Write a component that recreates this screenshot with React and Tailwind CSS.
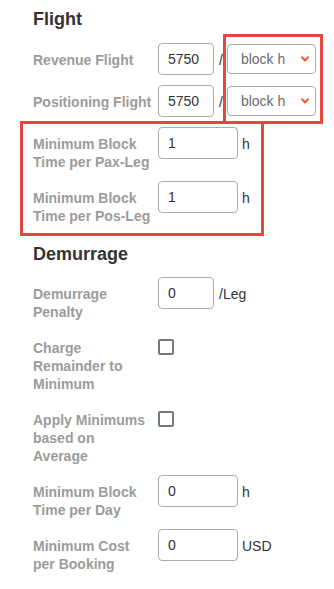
import React from "react";

const font = { fontFamily: '"Liberation Sans", Arial, sans-serif' };

function Label({ children }) {
  return (
    <div className="w-[119px] mr-[6px] shrink-0 pt-[8px] leading-[18px] text-[14px] font-bold text-[#9b9b9b]">
      {children}
    </div>
  );
}

function Box({ w, value }) {
  return (
    <div
      className={`${w} h-[32px] shrink-0 border border-[#ababab] rounded-[4px] pl-[9px] flex items-center text-[14px] text-[#333]`}
    >
      {value}
    </div>
  );
}

function Unit({ children, ml }) {
  return (
    <div className={`${ml} pt-[8px] leading-[18px] text-[14px] text-[#333]`}>
      {children}
    </div>
  );
}

function Select() {
  return (
    <div className="ml-[4px] mt-[1px] w-[89px] h-[30px] shrink-0 border border-[#ababab] rounded-[4px] pl-[13px] pr-[6px] flex items-center justify-between text-[14px] text-[#6b6b6b]">
      <span>block h</span>
      <svg width="8" height="6" viewBox="0 0 8 6">
        <path d="M1 1.2 L4 4.5 L7 1.2" fill="none" stroke="#f05a28" strokeWidth="2" strokeLinecap="round" strokeLinejoin="round" />
      </svg>
    </div>
  );
}

function Check() {
  return <div className="mt-[8px] w-[16px] h-[16px] shrink-0 border-2 border-[#777] rounded-[2px] bg-white" />;
}

function Row({ children }) {
  return <div className="flex items-start mb-[10px]">{children}</div>;
}

export default function App() {
  return (
    <div className="relative w-[334px] min-h-[589px] bg-white" style={font}>
      <div className="pt-[9px] pl-[33px]">
        <div className="text-[18px] leading-[20px] font-bold text-[#333] mb-[14px]">Flight</div>
        <Row>
          <Label>Revenue Flight</Label>
          <Box w="w-[56px]" value="5750" />
          <Unit ml="ml-[5px]">/</Unit>
          <Select />
        </Row>
        <Row>
          <Label>Positioning Flight</Label>
          <Box w="w-[56px]" value="5750" />
          <Unit ml="ml-[5px]">/</Unit>
          <Select />
        </Row>
        <Row>
          <Label>Minimum Block Time per Pax-Leg</Label>
          <Box w="w-[80px]" value="1" />
          <Unit ml="ml-[4px]">h</Unit>
        </Row>
        <Row>
          <Label>Minimum Block Time per Pos-Leg</Label>
          <Box w="w-[80px]" value="1" />
          <Unit ml="ml-[4px]">h</Unit>
        </Row>

        <div className="mt-[19px] text-[18px] leading-[20px] font-bold text-[#333] mb-[13px]">Demurrage</div>
        <Row>
          <Label>Demurrage Penalty</Label>
          <Box w="w-[56px]" value="0" />
          <Unit ml="ml-[5px]">/Leg</Unit>
        </Row>
        <Row>
          <Label>Charge Remainder to Minimum</Label>
          <Check />
        </Row>
        <Row>
          <Label>Apply Minimums based on Average</Label>
          <Check />
        </Row>
        <Row>
          <Label>Minimum Block Time per Day</Label>
          <Box w="w-[80px]" value="0" />
          <Unit ml="ml-[4px]">h</Unit>
        </Row>
        <Row>
          <Label>Minimum Cost per Booking</Label>
          <Box w="w-[80px]" value="0" />
          <Unit ml="ml-[4px]">USD</Unit>
        </Row>
      </div>

      <div className="absolute left-[223px] top-[34px] w-[100px] h-[90px] border-[3px] border-[#e5463d] pointer-events-none" />
      <div className="absolute left-[20px] top-[121px] w-[244px] h-[115px] border-[3px] border-[#e5463d] pointer-events-none" />
    </div>
  );
}
